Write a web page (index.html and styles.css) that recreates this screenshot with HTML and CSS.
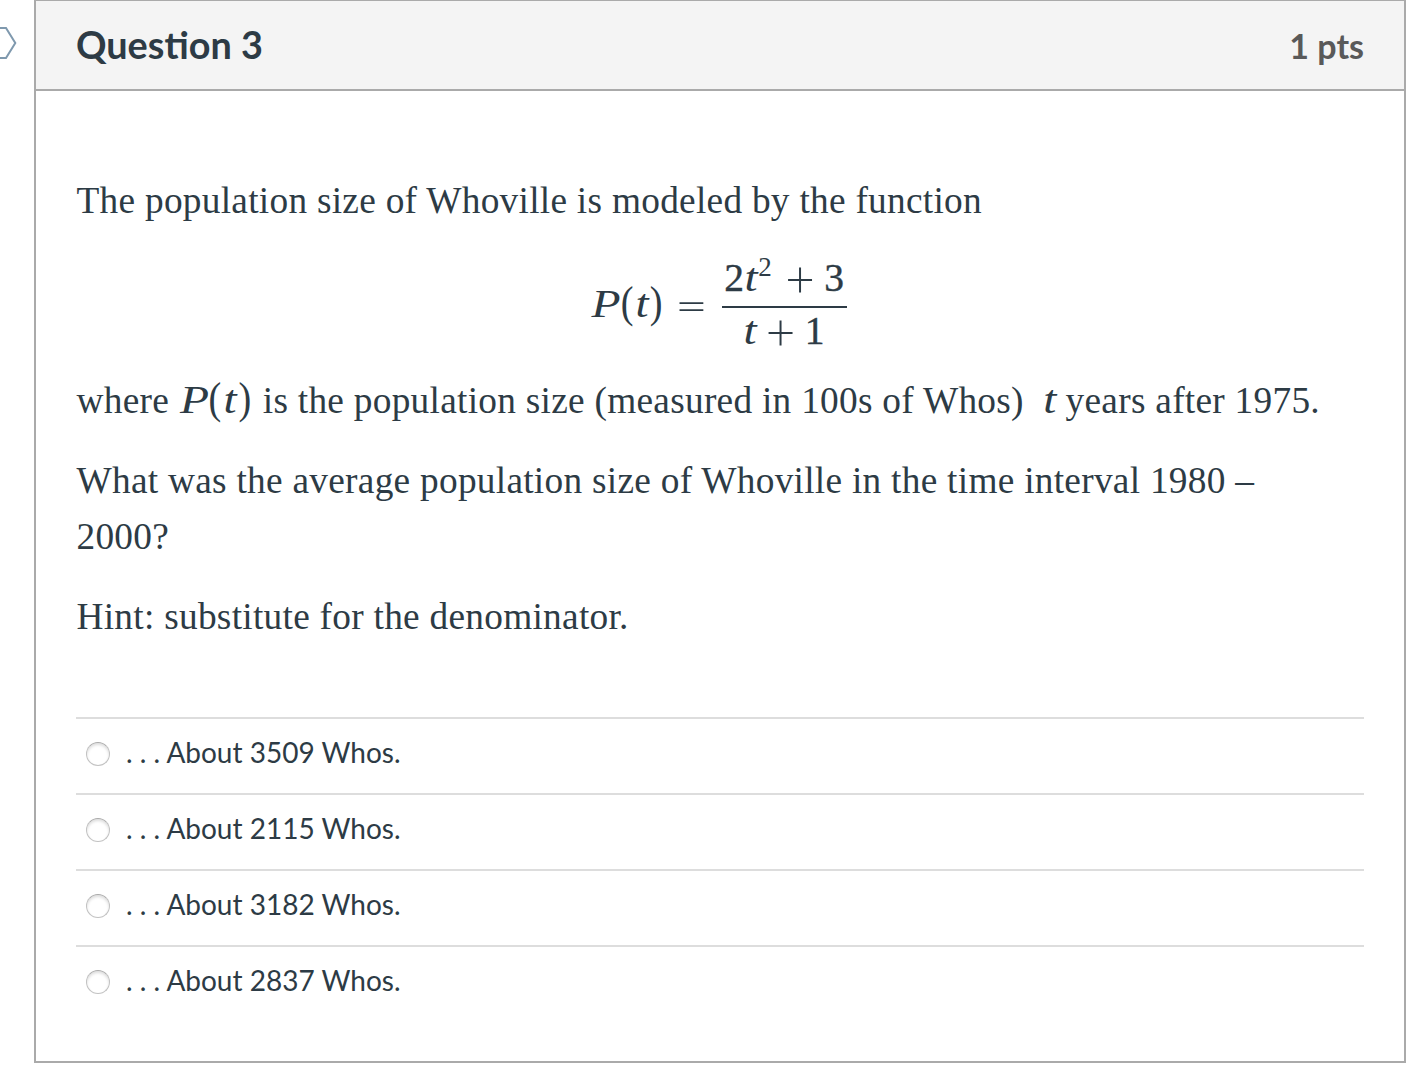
FILE: index.html
```html
<!DOCTYPE html>
<html lang="en">
<head>
<meta charset="utf-8">
<title>Question 3</title>
<link rel="stylesheet" href="styles.css">
</head>
<body>
<main class="page">
  <svg class="flag" width="17" height="34" viewBox="0 0 17 34" aria-hidden="true"><path d="M-2 2H6L15.3 17L6 32H-2" fill="#fff" stroke="#7f99ae" stroke-width="2"/></svg>
  <section class="question">
    <header class="question-header"><h1>Question 3</h1><span class="points">1 pts</span></header>
    <div class="question-body">
      <div class="prompt">
        <p>The population size of Whoville is modeled by the function</p>
        <div class="formula">
          <span class="call"><i class="cap">P</i><span class="paren">(</span><i class="var">t</i><span class="paren">)</span></span>
          <span class="equals">=</span>
          <span class="fraction">
            <span class="numerator"><span class="digit">2</span><i class="var">t</i><sup>2</sup><span class="plus">+</span><span class="digit">3</span></span>
            <span class="denominator"><i class="var">t</i><span class="plus">+</span><span class="digit">1</span></span>
          </span>
        </div>
        <p>where <span class="call inline"><i class="cap">P</i><span class="paren">(</span><i class="var">t</i><span class="paren">)</span></span> is the population size (measured in 100s of Whos)&nbsp; <i class="var solo">t</i> years after 1975.</p>
        <p>What was the average population size of Whoville in the time interval 1980 –<br>2000?</p>
        <p>Hint: substitute for the denominator.</p>
      </div>
      <div class="answers">
        <label class="answer"><input type="radio" name="answer"><span>. . . About 3509 Whos.</span></label>
        <label class="answer"><input type="radio" name="answer"><span>. . . About 2115 Whos.</span></label>
        <label class="answer"><input type="radio" name="answer"><span>. . . About 3182 Whos.</span></label>
        <label class="answer"><input type="radio" name="answer"><span>. . . About 2837 Whos.</span></label>
      </div>
    </div>
  </section>
</main>
</body>
</html>
```
FILE: styles.css
```css
* { box-sizing: border-box; }
body { margin: 0; background: #fff; color: #2d3b45; font-family: Lato, sans-serif; }
.page { display: flex; height: 1066px; overflow: hidden; }
.flag { flex: none; width: 17px; margin-top: 26px; margin-right: 17px; }
.question { width: 1372px; height: 1063px; border: 2px solid #aaa; border-top-width: 1px; }
.question-header { display: flex; justify-content: space-between; align-items: center; height: 90px; padding: 0 40px 2px; background: #f4f4f4; border-bottom: 2px solid #aaa; }
h1 { margin: 2px 0 0; font-size: 37.8px; font-weight: 700; line-height: 48px; }
.points { margin-top: 3px; color: #595959; font-size: 34px; font-weight: 700; }
.question-body { padding: 82px 40px 0; }
.prompt { height: 544px; font: 37.33px/56px "Liberation Serif", serif; letter-spacing: 0.27px; }
p { margin: 0 0 24px; padding-left: 0.5px; }

/* Math: every glyph sits centred in its own cell on a shared baseline */
.formula { display: flex; justify-content: center; height: 96px; margin-bottom: 24px; padding-right: 3px; letter-spacing: 0; }
.call { display: inline-flex; align-items: baseline; width: 71px; letter-spacing: 0; }
.formula .call { padding-top: 49px; }
.cap, .var, .paren, .digit, .plus, .equals, sup { display: inline-flex; flex: none; justify-content: center; line-height: 0; }
.cap { width: 30px; font-size: 41px; transform: scaleX(1.16); }
.var { width: 14px; font-size: 41px; transform: scaleX(1.15); }
.paren { width: 12px; font-size: 45px; transform: scaleX(0.85); }
.call .var { margin: 0 1px 0 2px; }
.digit { width: 18px; font-size: 39.5px; -webkit-text-stroke: 0.4px #2d3b45; }
.plus { width: 28px; font: 300 51px/0 Lato, sans-serif; transform: translateY(6px); }
.equals { width: 27px; margin-left: 16px; padding-top: 46px; font: 300 46px/0 Lato, sans-serif; transform: translateY(6px) scaleX(1.25); }
sup { width: 14px; font-size: 27px; transform: translateY(-15px); }
.fraction { width: 125px; margin-left: 17px; }
.numerator, .denominator { display: flex; align-items: baseline; justify-content: center; }
.numerator { height: 55px; padding-top: 18.5px; border-bottom: 2px solid #2d3b45; }
.denominator { padding-top: 17px; }
.numerator .var { margin-left: 1px; }
.numerator .plus { margin: 0 11px 0 14px; }
.denominator { padding-right: 2px; }
.denominator .plus { margin: 0 11px 0 10px; }
.call.inline { margin: 0 2px 0 1.5px; }
.inline .cap { width: 29px; }
.inline .var { margin: 0 2px; }
.solo { width: 14px; margin: 0 -1px 0 0; }

.answer { display: flex; height: 76px; padding-left: 10px; border-top: 2px solid #ddd; font-size: 28px; line-height: 67px; }
.answer input { appearance: none; width: 24px; height: 24px; margin: 23px 16px 0 0; border: 1px solid #c2c2c2; border-top-color: #aaa; border-radius: 50%; background: #fff; box-shadow: inset 0 2px 3px #ddd; }
```
